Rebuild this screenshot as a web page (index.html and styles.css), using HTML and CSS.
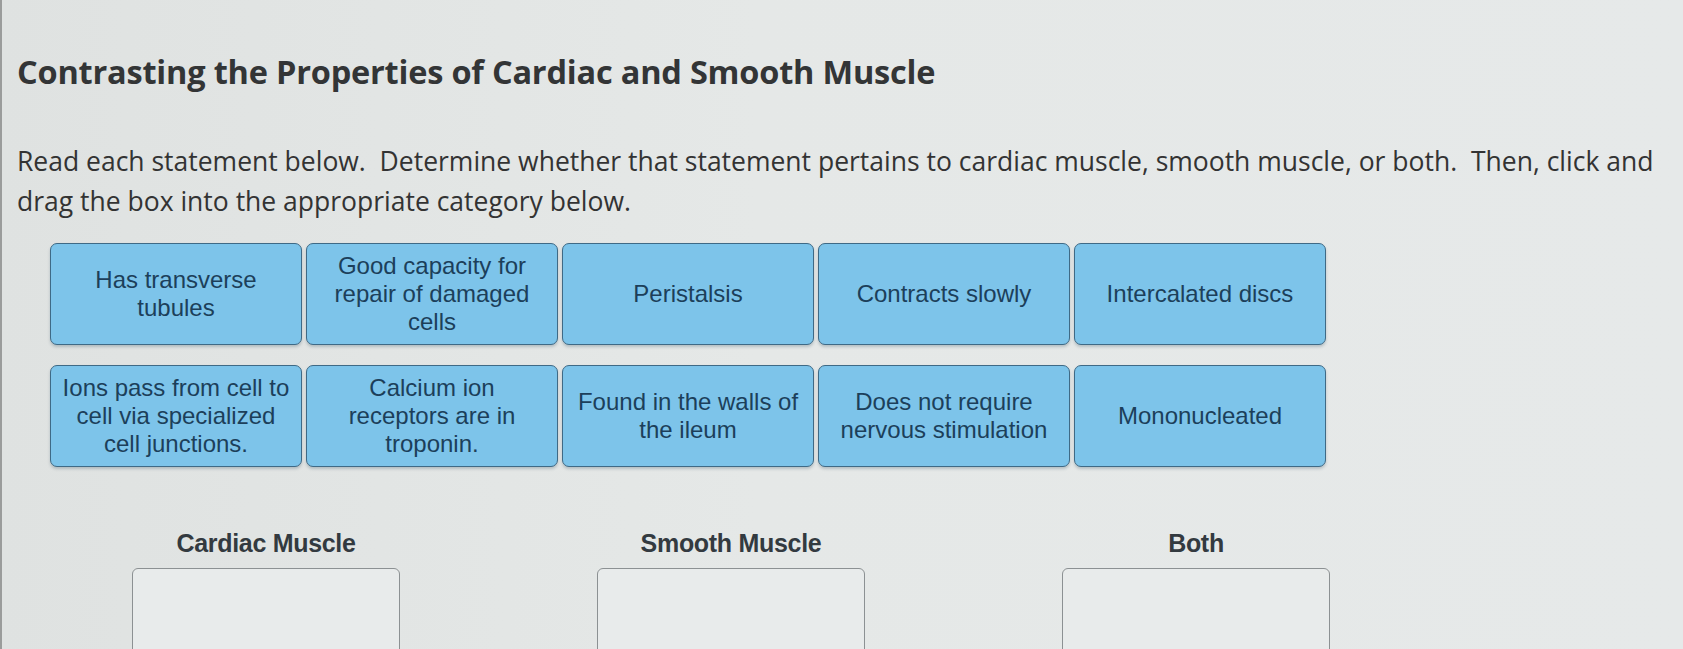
FILE: index.html
```html
<!DOCTYPE html>
<html lang="en">
<head>
<meta charset="utf-8">
<title>Contrasting the Properties of Cardiac and Smooth Muscle</title>
<link rel="stylesheet" href="styles.css">
</head>
<body>
<main class="activity">
  <h1 class="title">Contrasting the Properties of Cardiac and Smooth Muscle</h1>
  <p class="prompt">Read each statement below.&nbsp; Determine whether that statement pertains to cardiac muscle, smooth muscle, or both.&nbsp; Then, click and drag the box into the appropriate category below.</p>

  <div class="cards">
    <div class="card">Has transverse tubules</div>
    <div class="card">Good capacity for repair of damaged cells</div>
    <div class="card">Peristalsis</div>
    <div class="card">Contracts slowly</div>
    <div class="card">Intercalated discs</div>
    <div class="card">Ions pass from cell to cell via specialized cell junctions.</div>
    <div class="card">Calcium ion receptors are in troponin.</div>
    <div class="card">Found in the walls of the ileum</div>
    <div class="card">Does not require nervous stimulation</div>
    <div class="card">Mononucleated</div>
  </div>

  <div class="bins">
    <section class="bin">
      <h2 class="bin-label">Cardiac Muscle</h2>
      <div class="bin-drop"></div>
    </section>
    <section class="bin">
      <h2 class="bin-label">Smooth Muscle</h2>
      <div class="bin-drop"></div>
    </section>
    <section class="bin">
      <h2 class="bin-label">Both</h2>
      <div class="bin-drop"></div>
    </section>
  </div>
</main>
</body>
</html>
```

FILE: styles.css
```css
html, body {
  margin: 0;
  padding: 0;
  height: 100%;
  overflow: hidden;
}

body {
  background: linear-gradient(90deg, #dfe2e1 0%, #e5e8e7 45%, #e6e9e9 100%);
  color: #2b2b2b;
  font-family: "Open Sans", "Liberation Sans", sans-serif;
  border-left: 2px solid #9a9c9b;
  box-sizing: border-box;
}

.activity {
  padding: 0 0 0 15px;
}

.title {
  margin: 0;
  padding-top: 51px;
  font-size: 32.5px;
  line-height: 42px;
  font-weight: 700;
  color: #333536;
  letter-spacing: -0.2px;
}

.prompt {
  margin: 48px 0 0;
  font-size: 26.5px;
  line-height: 40px;
  color: #333;
  max-width: 1660px;
}

.cards {
  margin: 22px 0 0 33px;
  display: grid;
  grid-template-columns: repeat(5, 252px);
  column-gap: 4px;
  row-gap: 20px;
}

.card {
  height: 102px;
  box-sizing: border-box;
  padding: 0 11px;
  display: flex;
  align-items: center;
  justify-content: center;
  text-align: center;
  background: #7dc4ea;
  border: 1.5px solid #3f6a86;
  border-radius: 7px;
  box-shadow: 0 2px 3px rgba(40, 70, 90, 0.25);
  font-family: "Liberation Sans", Arial, sans-serif;
  font-size: 24px;
  line-height: 28px;
  color: #1c3f5a;
}

.bins {
  margin: 61px 0 0 115px;
  display: flex;
  gap: 197px;
}

.bin {
  width: 268px;
  display: flex;
  flex-direction: column;
  align-items: center;
}

.bin-label {
  margin: 0;
  font-family: "Liberation Sans", Arial, sans-serif;
  font-size: 25px;
  line-height: 30px;
  font-weight: 700;
  color: #333a40;
  letter-spacing: -0.3px;
}

.bin-drop {
  margin-top: 10px;
  width: 100%;
  height: 140px;
  box-sizing: border-box;
  background: #e8ebeb;
  border: 1.5px solid #8c9193;
  border-radius: 6px;
}
```
